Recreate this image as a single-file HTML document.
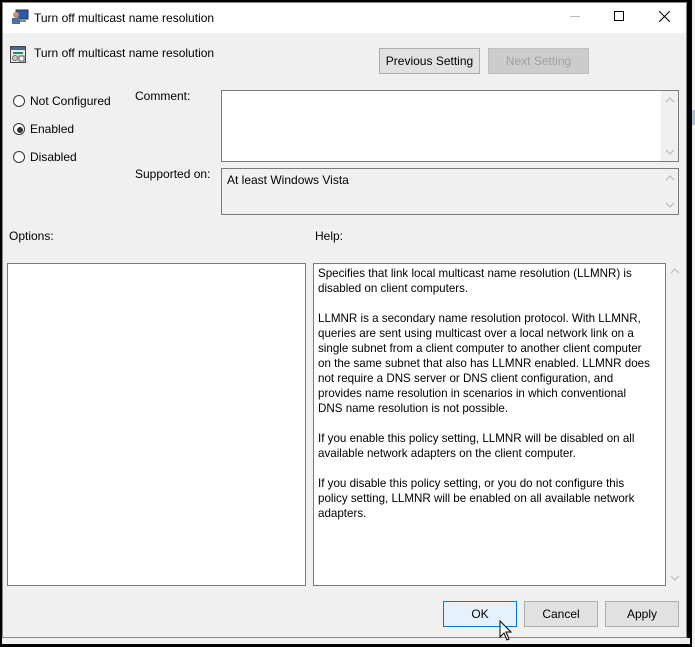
<!DOCTYPE html>
<html><head><style>
*{margin:0;padding:0;box-sizing:border-box}
body{width:695px;height:647px;position:relative;background:#fff;font-family:"Liberation Sans",sans-serif;font-size:12px;color:#000;overflow:hidden}
.a{position:absolute;white-space:nowrap}
.btn{position:absolute;border:1px solid #adadad;background:#e1e1e1;text-align:center;line-height:24px}
.radio{position:absolute;width:12px;height:12px;border:1px solid #333;border-radius:50%;background:#fff}
.box{position:absolute;border:1px solid #7a7a7a;background:#fff}
</style></head><body>
<div class="a" style="left:0;top:0;width:695px;height:647px;background:#000"></div>
<div class="a" style="left:692px;top:0;width:3px;height:647px;background:#f0f0f0"></div>
<div class="a" style="left:692px;top:110px;width:3px;height:15px;background:#a8c0d8"></div>
<div class="a" style="left:2px;top:638px;width:688px;height:6px;background:#f0f0f0"></div>
<div class="a" style="left:2px;top:2px;width:685px;height:636px;background:#f0f0f0;border:1px solid #888"></div>
<div class="a" style="left:3px;top:3px;width:683px;height:30px;background:#fff"></div>
<svg class="a" style="left:11px;top:9px" width="18" height="16"><rect x="5" y="1" width="12" height="9" fill="#2a5bb0" stroke="#333" stroke-width="1"/><circle cx="5" cy="6" r="3" fill="#c49070"/><rect x="1" y="9" width="8" height="6" fill="#4b6fa8"/><rect x="9" y="11" width="6" height="2" fill="#888"/></svg>
<div class="a" style="left:34px;top:11px;font-size:12px">Turn off multicast name resolution</div>
<div class="a" style="left:570px;top:16px;width:10px;height:1px;background:#bbb"></div>
<div class="a" style="left:614px;top:11px;width:10px;height:10px;border:1px solid #000"></div>
<svg class="a" style="left:659px;top:11px" width="11" height="11"><path d="M0 0L11 11M11 0L0 11" stroke="#000" stroke-width="1"/></svg>
<svg class="a" style="left:10px;top:46px" width="16" height="17"><rect x="0.5" y="0.5" width="15" height="16" fill="#e8e8e8" stroke="#444"/><rect x="1" y="1" width="14" height="3" fill="#4a6a8a"/><rect x="3" y="6" width="10" height="2" fill="#2a8a5a"/><circle cx="5" cy="12" r="2.5" fill="#ccc" stroke="#666"/><rect x="9" y="10" width="5" height="5" fill="#fff" stroke="#555"/></svg>
<div class="a" style="left:34px;top:46px">Turn off multicast name resolution</div>
<div class="btn" style="left:379px;top:48px;width:101px;height:26px">Previous Setting</div>
<div class="btn" style="left:488px;top:48px;width:101px;height:26px;background:#cccccc;border-color:#bfbfbf;color:#a0a0a0">Next Setting</div>
<div class="radio" style="left:13px;top:95px"></div><div class="a" style="left:30px;top:94px">Not Configured</div>
<div class="radio" style="left:13px;top:123px"></div><div class="a" style="left:17px;top:127px;width:6px;height:6px;border-radius:50%;background:#333"></div><div class="a" style="left:30px;top:122px">Enabled</div>
<div class="radio" style="left:13px;top:151px"></div><div class="a" style="left:30px;top:150px">Disabled</div>
<div class="a" style="left:135px;top:89px">Comment:</div>
<div class="box" style="left:221px;top:90px;width:458px;height:72px"><div class="a" style="right:0;top:0;width:17px;height:70px;background:#f0f0f0"></div>
<svg class="a" style="left:443px;top:6px" width="10" height="6"><path d="M1 5L5 1L9 5" fill="none" stroke="#c0c0c0" stroke-width="1.3"/></svg>
<svg class="a" style="left:443px;top:58px" width="10" height="6"><path d="M1 1L5 5L9 1" fill="none" stroke="#c0c0c0" stroke-width="1.3"/></svg></div>
<div class="a" style="left:135px;top:167px">Supported on:</div>
<div class="box" style="left:221px;top:168px;width:458px;height:47px;background:#f0f0f0"><div class="a" style="left:5px;top:4px;color:#000">At least Windows Vista</div>
<svg class="a" style="left:443px;top:6px" width="10" height="6"><path d="M1 5L5 1L9 5" fill="none" stroke="#c0c0c0" stroke-width="1.3"/></svg>
<svg class="a" style="left:443px;top:33px" width="10" height="6"><path d="M1 1L5 5L9 1" fill="none" stroke="#c0c0c0" stroke-width="1.3"/></svg></div>
<div class="a" style="left:9px;top:229px">Options:</div>
<div class="a" style="left:315px;top:229px">Help:</div>
<div class="box" style="left:7px;top:263px;width:299px;height:323px"></div>
<div class="box" style="left:313px;top:263px;width:353px;height:323px"></div>
<svg class="a" style="left:670px;top:268px" width="10" height="6"><path d="M1 5L5 1L9 5" fill="none" stroke="#c0c0c0" stroke-width="1.3"/></svg>
<svg class="a" style="left:670px;top:575px" width="10" height="6"><path d="M1 1L5 5L9 1" fill="none" stroke="#c0c0c0" stroke-width="1.3"/></svg>
<div class="a" style="left:318px;top:266px;line-height:15px;font-size:11.6px">Specifies that link local multicast name resolution (LLMNR) is<br>disabled on client computers.<br><br>LLMNR is a secondary name resolution protocol. With LLMNR,<br>queries are sent using multicast over a local network link on a<br>single subnet from a client computer to another client computer<br>on the same subnet that also has LLMNR enabled. LLMNR does<br>not require a DNS server or DNS client configuration, and<br>provides name resolution in scenarios in which conventional<br>DNS name resolution is not possible.<br><br>If you enable this policy setting, LLMNR will be disabled on all<br>available network adapters on the client computer.<br><br>If you disable this policy setting, or you do not configure this<br>policy setting, LLMNR will be enabled on all available network<br>adapters.</div>
<div class="btn" style="left:443px;top:601px;width:74px;height:26px;background:#e5f1fb;border-color:#0078d7">OK</div>
<div class="btn" style="left:524px;top:601px;width:74px;height:26px">Cancel</div>
<div class="btn" style="left:605px;top:601px;width:74px;height:26px">Apply</div>
<svg class="a" style="left:499px;top:620px" width="14" height="22"><path d="M1 1L1 17L5 13L8 20L10 19L7 12L12 12Z" fill="#fff" stroke="#000" stroke-width="1"/></svg>
</body></html>
